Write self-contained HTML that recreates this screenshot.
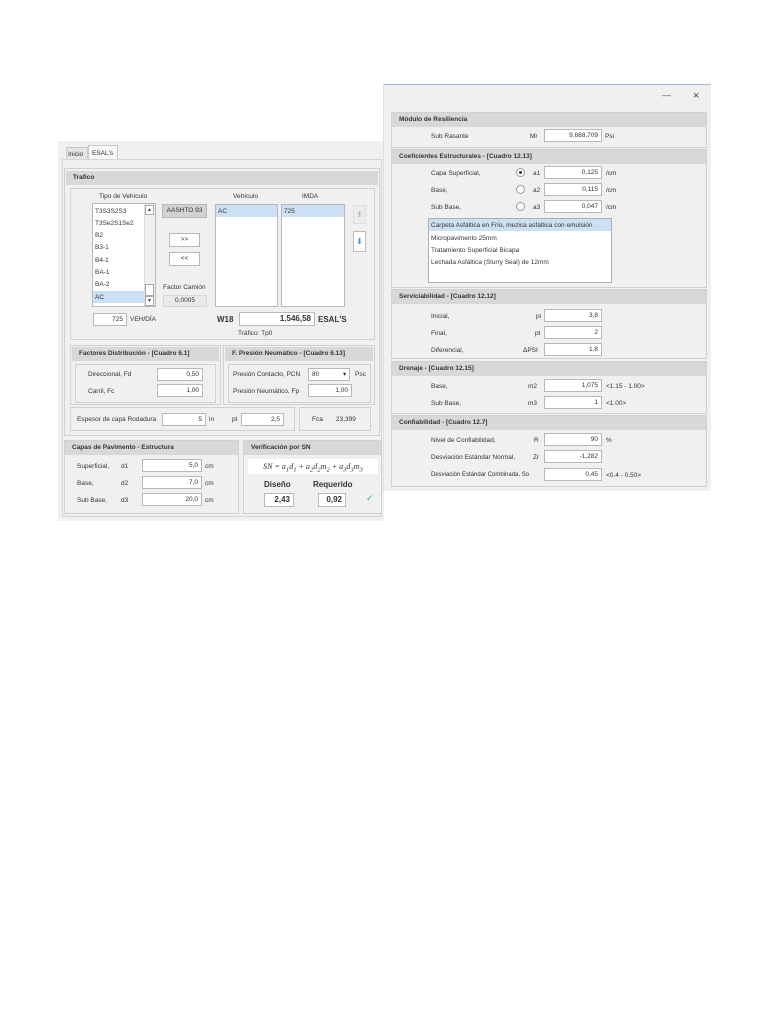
<!DOCTYPE html>
<html><head><meta charset="utf-8"><style>
*{margin:0;padding:0;box-sizing:border-box}
body{width:768px;height:1024px;background:#fff;position:relative;overflow:hidden;font-family:"Liberation Sans",sans-serif;font-size:6.5px;color:#333}
div,span{position:absolute}
.win{background:#f0f0f0}
.hd{background:#d8d8d8;font-weight:bold;font-size:6.5px;color:#333;padding-left:7px;line-height:14px;height:14px}
.bx{border:1px solid #d0d0d0}
.in{background:#fff;border:1px solid #b8b8b8;text-align:right;padding-right:3px;line-height:12px;height:13px;font-size:6.5px}
.t{white-space:nowrap;line-height:9px}
.b{font-weight:bold}
</style></head><body>

<!-- LEFT WINDOW -->
<div class="win" style="left:58px;top:141px;width:326px;height:380px"></div>
<div style="left:66px;top:147px;width:22px;height:13px;background:#e4e4e4;border:1px solid #c8c8c8"></div><span class="t" style="left:68px;top:150px">Inicio</span>
<div style="left:88px;top:145px;width:30px;height:15px;background:#f7f7f7;border:1px solid #c8c8c8;border-bottom:none"></div><span class="t" style="left:92px;top:149px">ESAL's</span>
<div class="bx" style="left:62px;top:159px;width:320px;height:358px;border-color:#d6d6d6"></div>
<div class="bx" style="left:64px;top:168px;width:316px;height:268px"></div>
<div class="hd" style="left:66px;top:171px;width:312px">Trafico</div>
<div class="bx" style="left:70px;top:188px;width:305px;height:152px"></div>
<span class="t" style="left:99px;top:192px">Tipo de Vehículo</span>
<div style="left:92px;top:203px;width:64px;height:104px;background:#fff;border:1px solid #b8b8b8"></div>
<div style="left:93px;top:291px;width:51px;height:12px;background:#cce0f5"></div>
<span class="t" style="left:95px;top:207px">T3S3S2S3</span>
<span class="t" style="left:95px;top:219px">T3Se2S1Se2</span>
<span class="t" style="left:95px;top:231px">B2</span>
<span class="t" style="left:95px;top:243px">B3-1</span>
<span class="t" style="left:95px;top:256px">B4-1</span>
<span class="t" style="left:95px;top:268px">BA-1</span>
<span class="t" style="left:95px;top:280px">BA-2</span>
<span class="t" style="left:95px;top:293px">AC</span>
<div style="left:144px;top:204px;width:11px;height:102px;background:#f0f0f0;border-left:1px solid #ddd"></div>
<div style="left:145px;top:205px;width:9px;height:10px;background:#fff;border:1px solid #aaa;font-size:5px;text-align:center;line-height:8px">▲</div>
<div style="left:145px;top:284px;width:9px;height:12px;background:#fff;border:1px solid #aaa"></div>
<div style="left:145px;top:296px;width:9px;height:10px;background:#fff;border:1px solid #aaa;font-size:5px;text-align:center;line-height:8px">▼</div>
<div style="left:162px;top:204px;width:45px;height:14px;background:#d2d2d2;border:1px solid #b8b8b8;text-align:center;line-height:12px">AASHTO 93</div>
<div style="left:169px;top:233px;width:31px;height:14px;background:#fff;border:1px solid #b8b8b8;text-align:center;line-height:12px">&gt;&gt;</div>
<div style="left:169px;top:252px;width:31px;height:14px;background:#fff;border:1px solid #b8b8b8;text-align:center;line-height:12px">&lt;&lt;</div>
<span class="t" style="left:163px;top:283px">Factor Camión</span>
<div style="left:163px;top:295px;width:44px;height:12px;background:#eaeaea;border:1px solid #d6d6d6;text-align:center;line-height:10px">0,0005</div>
<span class="t" style="left:233px;top:192px">Vehículo</span>
<span class="t" style="left:302px;top:192px">IMDA</span>
<div style="left:215px;top:204px;width:63px;height:103px;background:#fff;border:1px solid #b8b8b8"></div>
<div style="left:216px;top:205px;width:61px;height:12px;background:#cce0f5"></div><span class="t" style="left:218px;top:207px">AC</span>
<div style="left:281px;top:204px;width:64px;height:103px;background:#fff;border:1px solid #b8b8b8"></div>
<div style="left:282px;top:205px;width:62px;height:12px;background:#cce0f5"></div><span class="t" style="left:284px;top:207px">725</span>
<div style="left:353px;top:205px;width:13px;height:19px;background:#ececec;border:1px solid #ddd;color:#bbb;text-align:center;line-height:17px;font-size:8px">⬆</div>
<div style="left:353px;top:231px;width:13px;height:21px;background:#fff;border:1px solid #bbb;color:#4a90d0;text-align:center;line-height:19px;font-size:8px">⬇</div>
<div class="in" style="left:93px;top:313px;width:34px">725</div><span class="t" style="left:130px;top:315px">VEH/DÍA</span>
<span class="t b" style="left:217px;top:315px;font-size:8px">W18</span>
<div class="in b" style="left:239px;top:312px;width:76px;height:14px;font-size:8px">1.546,58</div>
<span class="t b" style="left:318px;top:315px;font-size:8px">ESAL'S</span>
<span class="t" style="left:238px;top:329px">Tráfico: Tp0</span>

<div class="bx" style="left:70px;top:345px;width:151px;height:60px"></div>
<div class="hd" style="left:72px;top:347px;width:147px">Factores Distribución - [Cuadro 6.1]</div>
<div class="bx" style="left:75px;top:364px;width:141px;height:39px"></div>
<span class="t" style="left:88px;top:370px">Direccional, Fd</span><div class="in" style="left:157px;top:368px;width:46px">0,50</div>
<span class="t" style="left:88px;top:387px">Carril, Fc</span><div class="in" style="left:157px;top:384px;width:46px">1,00</div>
<div class="bx" style="left:223px;top:345px;width:152px;height:60px"></div>
<div class="hd" style="left:225px;top:347px;width:148px">F. Presión Neumático - [Cuadro 6.13]</div>
<div class="bx" style="left:228px;top:364px;width:143px;height:39px"></div>
<span class="t" style="left:233px;top:370px">Presión Contacto, PCN</span><div class="in" style="left:308px;top:368px;width:42px;text-align:left;padding-left:3px">80<span style="left:34px;top:0">▾</span></div><span class="t" style="left:355px;top:370px">Psc</span>
<span class="t" style="left:233px;top:387px">Presión Neumático, Fp</span><div class="in" style="left:308px;top:384px;width:44px">1,00</div>
<div class="bx" style="left:70px;top:407px;width:225px;height:24px"></div>
<span class="t" style="left:77px;top:415px">Espesor de capa Rodadura</span><div class="in" style="left:162px;top:413px;width:44px">5</div><span class="t" style="left:209px;top:415px">in</span>
<span class="t" style="left:232px;top:415px">pt</span><div class="in" style="left:241px;top:413px;width:43px">2,5</div>
<div class="bx" style="left:299px;top:407px;width:72px;height:24px"></div>
<span class="t" style="left:312px;top:415px">Fca</span><span class="t" style="left:336px;top:415px">23,399</span>

<div class="bx" style="left:64px;top:440px;width:175px;height:74px"></div>
<div class="hd" style="left:65px;top:441px;width:173px">Capas de Pavimento - Estructura</div>
<span class="t" style="left:77px;top:462px">Superficial,</span><span class="t" style="left:121px;top:462px">d1</span><div class="in" style="left:142px;top:459px;width:60px">5,0</div><span class="t" style="left:205px;top:462px">cm</span>
<span class="t" style="left:77px;top:479px">Base,</span><span class="t" style="left:121px;top:479px">d2</span><div class="in" style="left:142px;top:476px;width:60px">7,0</div><span class="t" style="left:205px;top:479px">cm</span>
<span class="t" style="left:77px;top:496px">Sub Base,</span><span class="t" style="left:121px;top:496px">d3</span><div class="in" style="left:142px;top:493px;width:60px">20,0</div><span class="t" style="left:205px;top:496px">cm</span>
<div class="bx" style="left:243px;top:440px;width:139px;height:74px"></div>
<div class="hd" style="left:244px;top:441px;width:137px">Verificación por SN</div>
<div style="left:248px;top:459px;width:130px;height:15px;background:#fff;font-family:'Liberation Serif',serif;font-style:italic;font-size:8px;line-height:15px;text-align:center">SN = a<sub>1</sub>d<sub>1</sub> + a<sub>2</sub>d<sub>2</sub>m<sub>2</sub> + a<sub>3</sub>d<sub>3</sub>m<sub>3</sub></div>
<span class="t b" style="left:264px;top:480px;font-size:8px">Diseño</span>
<span class="t b" style="left:313px;top:480px;font-size:8px">Requerido</span>
<div class="in b" style="left:264px;top:493px;width:30px;height:14px;font-size:8px">2,43</div>
<div class="in b" style="left:318px;top:493px;width:28px;height:14px;font-size:8px">0,92</div>
<span class="t" style="left:366px;top:494px;color:#4caf70;font-size:9px">✓</span>

<!-- RIGHT WINDOW -->
<div class="win" style="left:383px;top:84px;width:328px;height:407px;border-top:1px solid #a8b8cc;border-left:1px solid #e0e0e0"></div>
<span class="t" style="left:662px;top:91px;font-size:9px;color:#555">—</span>
<span class="t" style="left:693px;top:90px;font-size:11px;color:#444;line-height:12px">×</span>

<div class="bx" style="left:391px;top:112px;width:316px;height:36px"></div>
<div class="hd" style="left:392px;top:113px;width:314px">Módulo de Resiliencia</div>
<span class="t" style="left:431px;top:132px">Sub Rasante</span><span class="t" style="left:530px;top:132px">Mr</span><div class="in" style="left:544px;top:129px;width:58px">9.668,709</div><span class="t" style="left:605px;top:132px">Psi</span>

<div class="bx" style="left:391px;top:149px;width:316px;height:139px"></div>
<div class="hd" style="left:392px;top:150px;width:314px">Coeficientes Estructurales - [Cuadro 12.13]</div>
<span class="t" style="left:431px;top:169px">Capa Superficial,</span><div style="left:516px;top:168px;width:9px;height:9px;border:1px solid #999;border-radius:50%;background:#fff"><div style="left:2px;top:2px;width:3px;height:3px;border-radius:50%;background:#333"></div></div><span class="t" style="left:533px;top:169px">a1</span><div class="in" style="left:544px;top:166px;width:58px">0,125</div><span class="t" style="left:606px;top:169px">/cm</span>
<span class="t" style="left:431px;top:186px">Base,</span><div style="left:516px;top:185px;width:9px;height:9px;border:1px solid #999;border-radius:50%;background:#fff"></div><span class="t" style="left:533px;top:186px">a2</span><div class="in" style="left:544px;top:183px;width:58px">0,115</div><span class="t" style="left:606px;top:186px">/cm</span>
<span class="t" style="left:431px;top:203px">Sub Base,</span><div style="left:516px;top:202px;width:9px;height:9px;border:1px solid #999;border-radius:50%;background:#fff"></div><span class="t" style="left:533px;top:203px">a3</span><div class="in" style="left:544px;top:200px;width:58px">0,047</div><span class="t" style="left:606px;top:203px">/cm</span>
<div style="left:428px;top:218px;width:184px;height:65px;background:#fff;border:1px solid #b0b0b0"></div>
<div style="left:429px;top:219px;width:182px;height:12px;background:#cce0f5"></div>
<span class="t" style="left:431px;top:221px">Carpeta Asfáltica en Frío, mezica asfáltica con emulsión</span>
<span class="t" style="left:431px;top:234px">Micropavimento 25mm</span>
<span class="t" style="left:431px;top:246px">Tratamiento Superficial Bicapa</span>
<span class="t" style="left:431px;top:258px">Lechada Asfáltica (Slurry Seal) de 12mm</span>

<div class="bx" style="left:391px;top:289px;width:316px;height:70px"></div>
<div class="hd" style="left:392px;top:290px;width:314px">Serviciabilidad - [Cuadro 12.12]</div>
<span class="t" style="left:431px;top:312px">Inicial,</span><span class="t" style="left:536px;top:312px">pi</span><div class="in" style="left:544px;top:309px;width:58px">3,8</div>
<span class="t" style="left:431px;top:329px">Final,</span><span class="t" style="left:535px;top:329px">pt</span><div class="in" style="left:544px;top:326px;width:58px">2</div>
<span class="t" style="left:431px;top:346px">Diferencial,</span><span class="t" style="left:523px;top:346px">ΔPSI</span><div class="in" style="left:544px;top:343px;width:58px">1,8</div>

<div class="bx" style="left:391px;top:361px;width:316px;height:53px"></div>
<div class="hd" style="left:392px;top:362px;width:314px">Drenaje - [Cuadro 12.15]</div>
<span class="t" style="left:431px;top:382px">Base,</span><span class="t" style="left:528px;top:382px">m2</span><div class="in" style="left:544px;top:379px;width:58px">1,075</div><span class="t" style="left:606px;top:382px">&lt;1.15 - 1.00&gt;</span>
<span class="t" style="left:431px;top:399px">Sub Base,</span><span class="t" style="left:528px;top:399px">m3</span><div class="in" style="left:544px;top:396px;width:58px">1</div><span class="t" style="left:606px;top:399px">&lt;1.00&gt;</span>

<div class="bx" style="left:391px;top:415px;width:316px;height:72px"></div>
<div class="hd" style="left:392px;top:416px;width:314px">Confiabilidad - [Cuadro 12.7]</div>
<span class="t" style="left:431px;top:436px">Nivel de Confiabilidad,</span><span class="t" style="left:534px;top:436px">R</span><div class="in" style="left:544px;top:433px;width:58px">90</div><span class="t" style="left:606px;top:436px">%</span>
<span class="t" style="left:431px;top:453px">Desviación Estándar Normal,</span><span class="t" style="left:533px;top:453px">Zr</span><div class="in" style="left:544px;top:450px;width:58px">-1,282</div>
<span class="t" style="left:431px;top:471px;font-size:6px">Desviación Estándar Combinada, So</span><div class="in" style="left:544px;top:468px;width:58px">0,45</div><span class="t" style="left:606px;top:471px">&lt;0.4 - 0.50&gt;</span>

</body></html>
